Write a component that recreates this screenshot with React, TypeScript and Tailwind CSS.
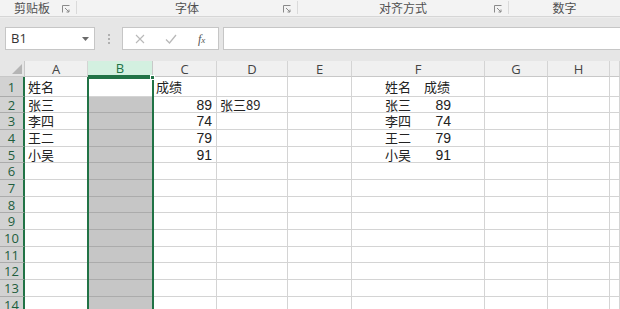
import React from "react";

const cols = ["A", "B", "C", "D", "E", "F", "G", "H", ""];
const rowHeights = [20, 16, 17, 17, 16, 17, 17, 16, 17, 17, 16, 17, 17, 16];

type Cell = { left?: string; right?: string; f?: [string, string] };
const data: Record<number, Record<string, Cell>> = {
  1: { A: { left: "姓名" }, C: { left: "成绩" }, F: { f: ["姓名", "成绩"] } },
  2: { A: { left: "张三" }, C: { right: "89" }, D: { left: "张三89" }, F: { f: ["张三", "89"] } },
  3: { A: { left: "李四" }, C: { right: "74" }, F: { f: ["李四", "74"] } },
  4: { A: { left: "王二" }, C: { right: "79" }, F: { f: ["王二", "79"] } },
  5: { A: { left: "小吴" }, C: { right: "91" }, F: { f: ["小吴", "91"] } },
};

function Launcher() {
  return (
    <svg width="8" height="8" viewBox="0 0 8 8" className="text-[#8a8a8a]">
      <path d="M0.5 7.5V0.5H7.5" fill="none" stroke="currentColor" strokeWidth="1" />
      <path d="M3 3L7 7M7 4.5V7H4.5" fill="none" stroke="currentColor" strokeWidth="1" />
    </svg>
  );
}

function RibbonGroup({ label, width, launcher = true }: { label: string; width: string; launcher?: boolean }) {
  return (
    <div className={`${width} relative flex items-center justify-center border-r border-[#dadada] h-[13px] mt-[1px]`}>
      <span className="text-[12px] leading-[13px] text-[#505050]">{label}</span>
      {launcher && (
        <span className="absolute right-[6px] top-[4px]">
          <Launcher />
        </span>
      )}
    </div>
  );
}

export default function App() {
  return (
    <div
      className="w-[620px] h-[309px] overflow-hidden bg-[#e6e6e6] select-none"
      style={{ fontFamily: '"Noto Sans CJK SC", "Noto Sans", sans-serif' }}
    >
      {/* ribbon group labels */}
      <div className="h-[17px] bg-[#f3f3f3] border-b border-[#d6d6d6] flex items-start">
        <RibbonGroup label="剪贴板" width="w-[77px] [&>span:first-child]:-ml-[12px]" />
        <RibbonGroup label="字体" width="w-[221px]" />
        <RibbonGroup label="对齐方式" width="w-[211px]" />
        <RibbonGroup label="数字" width="w-[111px] border-r-0" launcher={false} />
      </div>

      {/* formula bar */}
      <div className="h-[44px] flex items-start pt-[9px] border-t border-[#ececec]">
        <div className="ml-[5px] w-[90px] h-[23px] bg-white border border-[#c6c6c6] flex items-center justify-between px-[5px]">
          <span className="text-[13px] text-[#333]" style={{ fontFamily: '"Open Sans", sans-serif' }}>B1</span>
          <svg width="7" height="4" viewBox="0 0 7 4"><path d="M0 0H7L3.5 4Z" fill="#6a6a6a" /></svg>
        </div>
        <div className="w-[27px] h-[23px] flex flex-col items-center justify-center gap-[2px]">
          <span className="w-[2px] h-[2px] bg-[#b0b0b0]" />
          <span className="w-[2px] h-[2px] bg-[#b0b0b0]" />
          <span className="w-[2px] h-[2px] bg-[#b0b0b0]" />
        </div>
        <div className="w-[97px] h-[23px] bg-white border border-[#c6c6c6] flex items-center">
          <svg width="10" height="10" viewBox="0 0 10 10" className="ml-[12px]">
            <path d="M1 1L9 9M9 1L1 9" stroke="#b9b9b9" strokeWidth="1.1" />
          </svg>
          <svg width="12" height="10" viewBox="0 0 12 10" className="ml-[20px]">
            <path d="M1 5.5L4.5 9L11 1" fill="none" stroke="#b9b9b9" strokeWidth="1.3" />
          </svg>
          <span className="ml-[21px] text-[12px] italic text-[#555]" style={{ fontFamily: '"Liberation Serif", serif' }}>
            f<span className="text-[9px]">x</span>
          </span>
        </div>
        <div className="ml-[4px] flex-1 h-[23px] bg-white border border-[#c6c6c6] border-r-0" />
      </div>

      {/* sheet */}
      <div className="relative bg-white">
        <div className="grid grid-cols-[25px_63px_65px_64px_71px_64px_133px_63px_62px_10px]">
          {/* header row */}
          <div className="h-[16px] bg-[#e6e6e6] border-r border-b border-[#c8c8c8] relative">
            <svg width="10" height="10" viewBox="0 0 10 10" className="absolute right-[2px] bottom-[2px]">
              <path d="M10 0V10H0Z" fill="#b5b5b5" />
            </svg>
          </div>
          {cols.map((c, i) => (
            <div
              key={i}
              className={`h-[16px] flex items-center justify-center text-[13px] leading-[14px] border-r ${
                c === "B"
                  ? "bg-[#d3f0e0] text-[#217346] border-[#c8c8c8] border-b-2 border-b-[#217346]"
                  : "bg-[#f0f0f0] text-[#444] border-[#d4d4d4] border-b border-b-[#c8c8c8]"
              }`}
              style={{ fontFamily: '"Open Sans", sans-serif' }}
            >
              {c}
            </div>
          ))}

          {rowHeights.map((h, r) => {
            const row = r + 1;
            return (
              <React.Fragment key={row}>
                <div
                  className="bg-[#d2d2d2] border-r-2 border-r-[#217346] border-b border-b-[#ababab] flex items-center justify-center text-[13px] leading-[14px] text-[#1e5e3d]"
                  style={{ height: h, fontFamily: '"Open Sans", sans-serif' }}
                >
                  {row}
                </div>
                {cols.map((c, i) => {
                  const cell = data[row]?.[c];
                  const sel = c === "B" && row > 1;
                  return (
                    <div
                      key={i}
                      className={`relative border-r border-b overflow-visible whitespace-nowrap text-[13px] leading-[14px] text-[#222] flex items-center ${
                        sel ? "bg-[#c6c6c6] border-[#ababab]" : "bg-white border-[#d4d4d4]"
                      }`}
                      style={{ height: h }}
                    >
                      {cell?.left && <span className="pl-[3px] z-10">{cell.left}</span>}
                      {cell?.right && (
                        <span className="ml-auto pr-[4px] text-[14px]" style={{ fontFamily: '"Liberation Sans", sans-serif' }}>
                          {cell.right}
                        </span>
                      )}
                      {cell?.f && (
                        <span className="flex items-center w-full pl-[33px]">
                          <span>{cell.f[0]}</span>
                          {row === 1 ? (
                            <span className="ml-[13px]">{cell.f[1]}</span>
                          ) : (
                            <span className="ml-auto mr-[33px] text-[14px]" style={{ fontFamily: '"Liberation Sans", sans-serif' }}>
                              {cell.f[1]}
                            </span>
                          )}
                        </span>
                      )}
                    </div>
                  );
                })}
              </React.Fragment>
            );
          })}
        </div>

        {/* selection outline over column B */}
        <div className="absolute left-[87px] top-[16px] w-[67px] h-[300px] border-2 border-[#217346] pointer-events-none" />
        <div className="absolute left-[150px] top-[14px] w-[5px] h-[5px] bg-[#217346] border border-white pointer-events-none" />
      </div>
    </div>
  );
}
